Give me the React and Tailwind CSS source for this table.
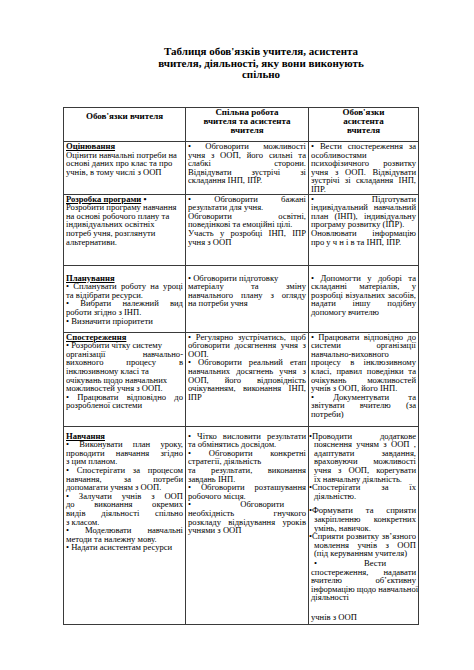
// line kinds: h = bold underlined heading, j = justified full line, l = left, plus optional indent/margin
const H = (t, extra) => ({ k: 'h', t, extra });
const J = (t, cls = '') => ({ k: 'j', t, cls });
const L = (t, cls = '') => ({ k: 'l', t, cls });

const rows = [
  {
    h: 'h-[51px]',
    pt: '',
    cells: [
      [H('Оцінювання'), L('Оцінити навчальні потреби на'), L('основі даних про клас та про'), L('учнів, в тому числі з ООП')],
      [J('• Обговорити можливості'), J('учня з ООП, його сильні та'), J('слабкі сторони.'), J('Відвідувати зустрічі зі'), L('складання ІНП, ІПР.')],
      [J('• Вести спостереження за'), L('особливостями'), J('психофізичного розвитку'), J('учня з ООП. Відвідувати'), J('зустрічі зі складання ІНП,'), L('ІПР.')],
    ],
  },
  {
    h: 'h-[71px]',
    pt: '',
    cells: [
      [H('Розробка програми', ' •'), L('Розробити програму навчання'), L('на основі робочого плану та'), L('індивідуальних освітніх'), L('потреб учня, розглянути'), L('альтернативи.')],
      [J('• Обговорити бажані'), L('результати для учня.'), J('Обговорити освітні,'), L('поведінкові та емоційні цілі.'), J('Участь у розробці ІНП, ІПР'), L('учня з ООП')],
      [J('• Підготувати'), J('індивідуальний навчальний'), J('план (ІНП), індивідуальну'), L('програму розвитку (ІПР).'), J('Оновлювати інформацію'), L('про у ч н і в та ІНП, ІПР.')],
    ],
  },
  {
    h: 'h-[67px]',
    pt: 'pt-[8px]',
    cells: [
      [H('Планування'), J('• Спланувати роботу на уроці'), L('та відібрати ресурси.'), J('• Вибрати належний вид'), L('роботи згідно з ІНП.'), L('• Визначити пріоритети')],
      [L('• Обговорити підготовку'), J('матеріалу та зміну'), J('навчального плану з огляду'), L('на потреби учня')],
      [J('• Допомогти у доборі та'), J('складанні матеріалів, у'), J('розробці візуальних засобів,'), J('надати іншу подібну'), L('допомогу вчителю')],
    ],
  },
  {
    h: 'h-[94px]',
    pt: '',
    cells: [
      [
        H('Спостереження'),
        L('• Розробити чітку систему'),
        J('організації навчально-'),
        J('виховного процесу в'),
        L('інклюзивному класі та'),
        L('очікувань щодо навчальних'),
        L('можливостей учня з ООП.'),
        J('• Працювати відповідно до'),
        L('розробленої системи'),
      ],
      [
        J('• Регулярно зустрічатись, щоб'),
        J('обговорити досягнення учня з'),
        L('ООП.'),
        J('• Обговорити реальний етап'),
        J('навчальних досягнень учня з'),
        J('ООП, його відповідність'),
        J('очікуванням, виконання ІНП,'),
        L('ІПР'),
      ],
      [
        J('• Працювати відповідно до'),
        J('системи організації'),
        L('навчально-виховного'),
        J('процесу в інклюзивному'),
        J('класі, правил поведінки та'),
        J('очікувань можливостей'),
        L('учнів з ООП, його ІНП.'),
        J('• Документувати та'),
        J('звітувати вчителю (за'),
        L('потреби)'),
      ],
    ],
  },
  {
    h: 'h-[198px]',
    pt: 'pt-[5px]',
    cells: [
      [
        H('Навчання'),
        J('• Виконувати план уроку,'),
        J('проводити навчання згідно'),
        L('з цим планом.'),
        J('• Спостерігати за процесом'),
        J('навчання, за потреби'),
        L('допомагати учням з ООП.'),
        J('• Залучати учнів з ООП'),
        J('до виконання окремих'),
        J('видів діяльності спільно'),
        L('з класом.'),
        J('• Моделювати навчальні'),
        L('методи та належну мову.'),
        L('•  Надати асистентам ресурси'),
      ],
      [
        J('• Чітко висловити результати'),
        L('та обмінятись досвідом.'),
        J('• Обговорити конкретні'),
        L('стратегії, діяльність'),
        J('та результати, виконання'),
        L('завдань ІНП.'),
        J('• Обговорити розташування'),
        L('робочого місця.'),
        J('• Обговорити', 'pr-[22px]'),
        J('необхідність гнучкого'),
        J('розкладу відвідування уроків'),
        L('учнями з ООП'),
      ],
      [
        J('•Проводити додаткове', '-ml-[2px]'),
        J('пояснення учням з ООП ,', 'pl-[3px]'),
        J('адаптувати завдання,', 'pl-[3px]'),
        J('враховуючи можливості', 'pl-[3px]'),
        J('учня з ООП, корегувати', 'pl-[3px]'),
        L('їх навчальну діяльність.', 'pl-[3px]'),
        J('•Спостерігати за їх', '-ml-[2px]'),
        L('діяльністю.', 'pl-[3px]'),
        J('•Формувати та сприяти', '-ml-[2px] mt-[6px]'),
        J('закріпленню конкретних', 'pl-[3px]'),
        L('умінь, навичок.', 'pl-[3px]'),
        J('•Сприяти розвитку зв\u02bcязного', '-ml-[2px]'),
        J('мовлення учнів з ООП', 'pl-[3px]'),
        L('(під керуванням учителя)', 'pl-[3px]'),
        J('• Вести', 'pl-[3px] pr-[30px] mt-[1px]'),
        J('спостереження, надавати'),
        J('вчителю об\u02bcєктивну'),
        J('інформацію щодо навчальної'),
        L('діяльності'),
        L('учнів з ООП', 'mt-[11px]'),
      ],
    ],
  },
];

function Line({ line }) {
  if (line.k === 'h') {
    return (
      <div className="whitespace-nowrap font-bold">
        <span className="underline">{line.t}</span>
        {line.extra}
      </div>
    );
  }
  if (line.k === 'j') {
    return <div className={`whitespace-nowrap text-justify [text-align-last:justify] ${line.cls}`}>{line.t}</div>;
  }
  return <div className={`whitespace-nowrap text-left ${line.cls}`}>{line.t}</div>;
}

const cell = 'border border-[#3a3a3a] px-[2px] pb-0 align-top';

export default function App() {
  return (
    <div className="min-h-[670px] w-[474px] bg-white text-black" style={{ fontFamily: '"Liberation Serif", "Times New Roman", serif' }}>
      <div className="pt-[46px] pl-[102px] w-[420px] text-center text-[11px] font-bold leading-[11.7px]">
        <p>Таблиця обов'язків учителя, асистента</p>
        <p>вчителя, діяльності, яку вони виконують</p>
        <p>спільно</p>
      </div>
      <table className="ml-[63px] mt-[26px] w-[355px] table-fixed border-collapse text-[8.6px] leading-[8.6px]">
        <colgroup>
          <col className="w-[122px]" />
          <col className="w-[123px]" />
          <col className="w-[110px]" />
        </colgroup>
        <thead>
          <tr className="h-[34px]">
            <th className="border border-[#3a3a3a] align-top pt-[4px] text-[9px] font-bold leading-[9px]">Обов'язки вчителя</th>
            <th className="border border-[#3a3a3a] align-top pt-[0px] text-[9px] font-bold leading-[9px]">
              Спільна робота<br />вчителя та асистента<br />вчителя
            </th>
            <th className="border border-[#3a3a3a] align-top pt-[0px] text-[9px] font-bold leading-[9px]">
              Обов'язки<br />асистента<br />вчителя
            </th>
          </tr>
        </thead>
        <tbody>
          {rows.map((r, i) => (
            <tr key={i} className={r.h}>
              {r.cells.map((lines, j) => (
                <td key={j} className={`${cell} ${r.pt}`}>
                  {lines.map((line, n) => (
                    <Line key={n} line={line} />
                  ))}
                </td>
              ))}
            </tr>
          ))}
        </tbody>
      </table>
    </div>
  );
}
